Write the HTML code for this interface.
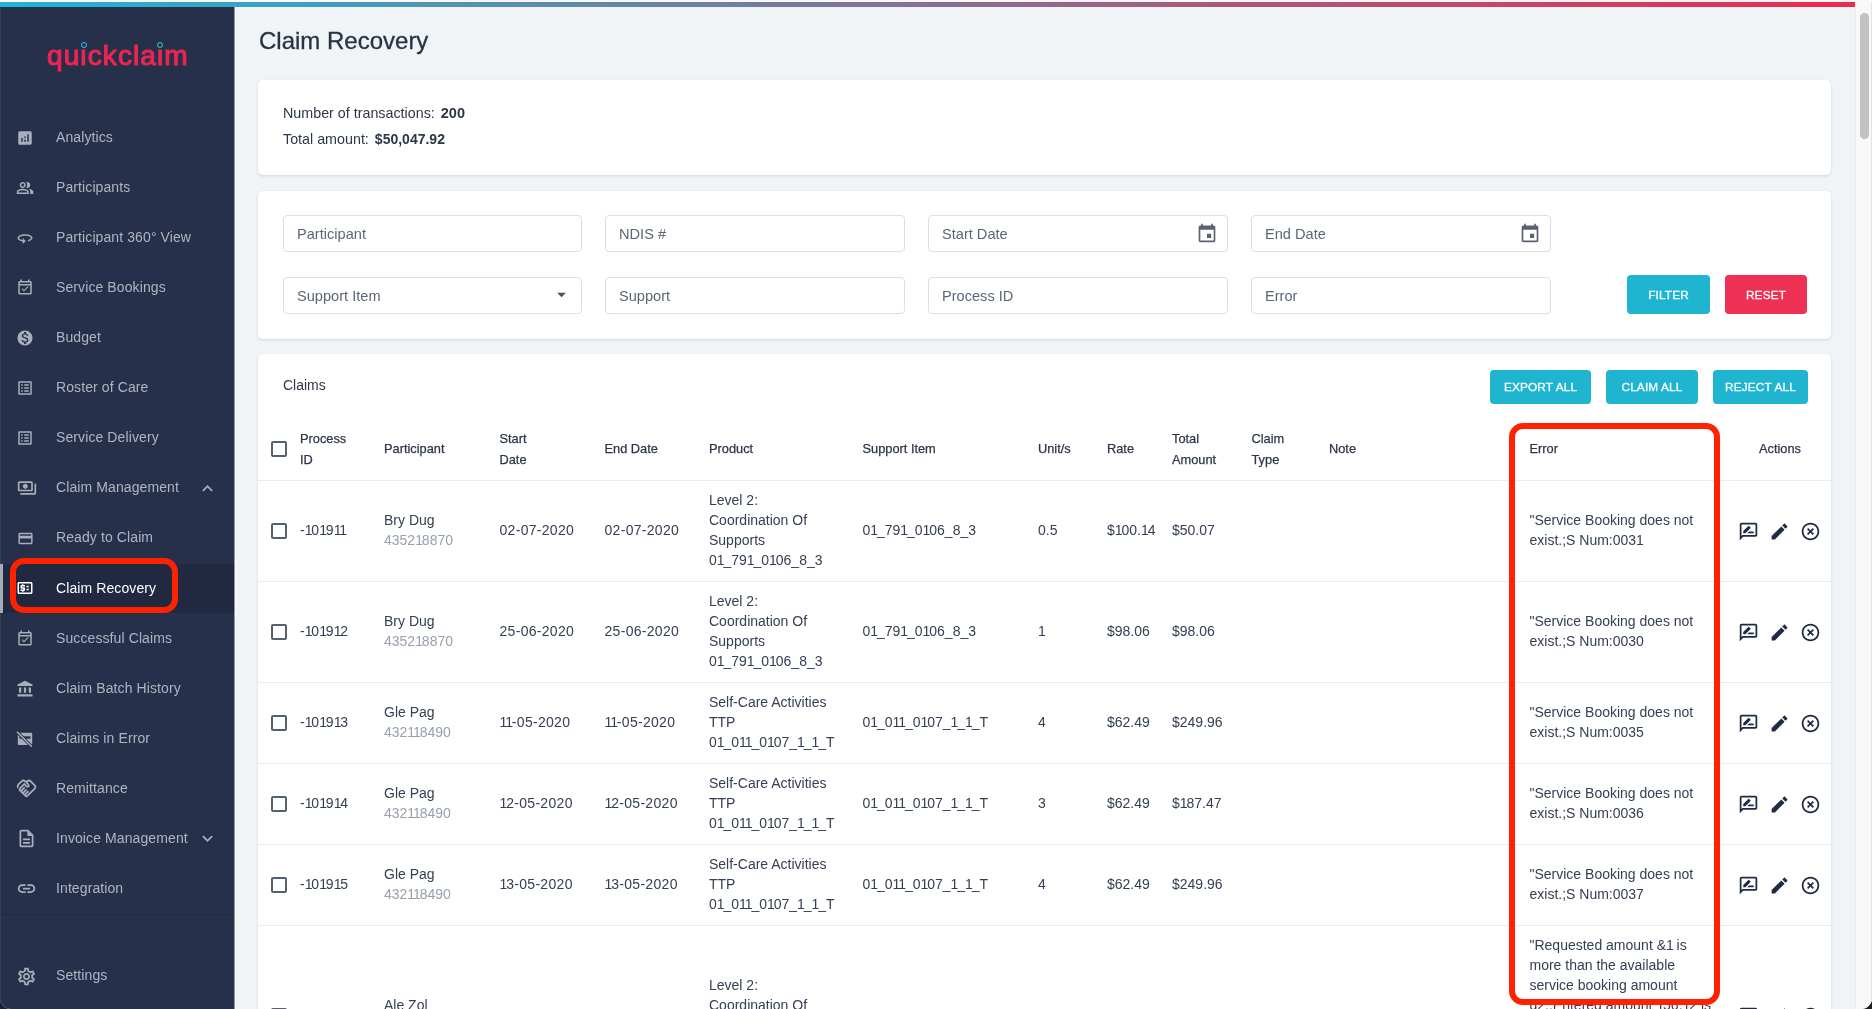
<!DOCTYPE html><html><head><meta charset="utf-8"><style>
*{box-sizing:border-box;margin:0;padding:0}
html,body{width:1872px;height:1009px;overflow:hidden;background:#1b2031}
body{font-family:"Liberation Sans",sans-serif;color:#2d3648;position:relative}
.a{position:absolute;white-space:nowrap}
#win{position:absolute;left:0;top:0;width:1872px;height:1009px;border-radius:0 0 11px 11px;overflow:hidden;background:#f1f4f7;will-change:transform}
.nav{position:absolute;left:56px;font-size:14px;line-height:20px;color:#adb4c0;letter-spacing:0.1px}
.card{position:absolute;background:#fff;border-radius:5px;box-shadow:0 1px 3px rgba(40,50,70,.16)}
.inp{position:absolute;height:37px;border:1px solid #dcdfe5;border-radius:4px;background:#fff;font-size:14.6px;color:#5d6676;padding:1px 0 0 13px;line-height:35px}
.btn{position:absolute;border-radius:4px;color:#fff;font-size:11.8px;font-weight:normal;-webkit-text-stroke:0.3px #fff;letter-spacing:0.15px;text-align:center}
.th{position:absolute;font-size:12.8px;font-weight:normal;-webkit-text-stroke:0.25px #2d3648;color:#2d3648;line-height:21px;white-space:nowrap}
.td{position:absolute;font-size:14px;color:#354054;line-height:20px;white-space:nowrap}
.hr{position:absolute;left:258px;width:1573px;height:1px;background:#ececee}
.cb{position:absolute;left:271px;width:16px;height:16px;border:2px solid #556072;border-radius:2px}
.gray{color:#97a0ac}
.n1{letter-spacing:-1.1px}
.dt{letter-spacing:0.3px}
.di{position:relative}
.di::after{content:'';position:absolute;left:-1px;right:-1px;top:0;height:8.5px;background:#27304b}
</style></head><body><div id="win">
<div class="a" style="left:0;top:0;width:1872px;height:2px;background:#fcf7f5"></div>
<div class="a" style="left:0;top:2px;width:1855px;height:5px;background:linear-gradient(90deg,#1db6d4 0%,#ee2a50 100%)"></div>
<div class="a" style="left:0;top:7px;width:234px;height:1002px;background:#27304b"></div>
<div class="a" style="left:234px;top:7px;width:1px;height:1002px;background:#8f96a3"></div>
<div class="a" style="left:0;top:7px;width:1px;height:1002px;background:#353d56"></div>
<div class="a" style="left:235px;top:7px;width:1px;height:1002px;background:#ffffff"></div>
<div id="logo" class="a" style="left:47px;top:42.4px;font-size:28px;line-height:28px;font-weight:normal;-webkit-text-stroke:1.1px #ec2552;color:#ec2552;letter-spacing:1.1px">qu<span class="di">i</span>ckcla<span class="di">i</span>m</div>
<div class="a" style="left:80.9px;top:41.9px;width:6px;height:6px;border:1.5px solid #3fc3e0;border-radius:50%"></div>
<div class="a" style="left:156.5px;top:41.9px;width:6px;height:6px;border:1.5px solid #3fc3e0;border-radius:50%"></div>
<div class="a" style="left:0;top:564px;width:234px;height:49px;background:#212940"></div>
<div class="a" style="left:0;top:564px;width:3px;height:49px;background:#a3acb8"></div>
<div class="a" style="left:0;top:914px;width:234px;height:1px;background:#222a42"></div>
<div class="nav a" style="top:127px;color:#aeb5c1">Analytics</div>
<svg class="a" style="left:16px;top:128.6px;" width="18" height="18" viewBox="0 0 24 24"><path fill="#a6afbb" d="M19,3H5C3.9,3,3,3.9,3,5v14c0,1.1,0.9,2,2,2h14c1.1,0,2-0.9,2-2V5C21,3.9,20.1,3,19,3z M9,17H7v-5h2V17z M13,17h-2v-3h2V17z M13,12h-2v-2h2V12z M17,17h-2V7h2V17z"/></svg>
<div class="nav a" style="top:177px;color:#aeb5c1">Participants</div>
<svg class="a" style="left:16.1px;top:178.7px;" width="18" height="18" viewBox="0 0 24 24"><path fill="#a6afbb" d="M16.67 13.13C18.04 14.06 19 15.32 19 17v3h4v-3c0-2.18-3.57-3.47-6.33-3.87zM15 12c2.21 0 4-1.79 4-4s-1.79-4-4-4c-.47 0-.91.1-1.33.24C14.5 5.27 15 6.58 15 8s-.5 2.73-1.33 3.76c.42.14.86.24 1.33.24zM9 12c2.21 0 4-1.79 4-4s-1.79-4-4-4-4 1.79-4 4 1.79 4 4 4zm0-6c1.1 0 2 .9 2 2s-.9 2-2 2-2-.9-2-2 .9-2 2-2zM9 13c-2.67 0-8 1.34-8 4v3h16v-3c0-2.66-5.33-4-8-4zm6 5H3v-.99C3.2 16.29 6.3 15 9 15s5.8 1.29 6 2v1z"/></svg>
<div class="nav a" style="top:227px;color:#aeb5c1">Participant 360° View</div>
<svg class="a" style="left:16.1px;top:228.8px;" width="18" height="18" viewBox="0 0 24 24"><path fill="#a6afbb" d="M12 7C6.48 7 2 9.24 2 12c0 2.24 2.94 4.13 7 4.77V20l4-4-4-4v2.73c-3.15-.56-5-1.9-5-2.73 0-1.06 3.04-3 8-3s8 1.94 8 3c0 .73-1.46 1.89-4 2.53v2.05c3.53-.77 6-2.53 6-4.58 0-2.76-4.48-5-10-5z"/></svg>
<div class="nav a" style="top:277px;color:#aeb5c1">Service Bookings</div>
<svg class="a" style="left:15.8px;top:278.1px;" width="18" height="18" viewBox="0 0 24 24"><path fill="#a6afbb" d="M19 4h-1V2h-2v2H8V2H6v2H5c-1.11 0-1.99.9-1.99 2L3 20c0 1.1.89 2 2 2h14c1.1 0 2-.9 2-2V6c0-1.1-.9-2-2-2zm0 16H5V10h14v10zm0-12H5V6h14v2zm-2.47 4.06l-1.06-1.06-4.88 4.88-2.12-2.12-1.06 1.06L10.58 18z"/></svg>
<div class="nav a" style="top:327px;color:#aeb5c1">Budget</div>
<svg class="a" style="left:15.8px;top:329.2px;" width="18" height="18" viewBox="0 0 24 24"><path fill="#a6afbb" d="M12 2C6.48 2 2 6.48 2 12s4.48 10 10 10 10-4.48 10-10S17.52 2 12 2zm1.41 16.09V20h-2.67v-1.93c-1.71-.36-3.16-1.46-3.27-3.4h1.96c.1 1.05.82 1.87 2.65 1.87 1.96 0 2.4-.98 2.4-1.59 0-.83-.44-1.61-2.67-2.14-2.48-.6-4.180-1.62-4.18-3.67 0-1.72 1.39-2.84 3.11-3.21V4h2.67v1.95c1.86.45 2.79 1.86 2.85 3.39H14.3c-.05-1.11-.64-1.87-2.22-1.87-1.5 0-2.4.68-2.4 1.640 0 .84.65 1.39 2.67 1.91s4.18 1.39 4.18 3.91c-.01 1.83-1.38 2.83-3.12 3.16z"/></svg>
<div class="nav a" style="top:377px;color:#aeb5c1">Roster of Care</div>
<svg class="a" style="left:16px;top:378.9px;" width="18" height="18" viewBox="0 0 24 24"><path fill="#a6afbb" d="M11 7h6v2h-6zm0 4h6v2h-6zm0 4h6v2h-6zM7 7h2v2H7zm0 4h2v2H7zm0 4h2v2H7zM20.1 3H3.9c-.5 0-.9.4-.9.9v16.2c0 .4.4.9.9.9h16.2c.4 0 .9-.5.9-.9V3.9c0-.5-.5-.9-.9-.9zM19 19H5V5h14v14z"/></svg>
<div class="nav a" style="top:427px;color:#aeb5c1">Service Delivery</div>
<svg class="a" style="left:16px;top:428.9px;" width="18" height="18" viewBox="0 0 24 24"><path fill="#a6afbb" d="M11 7h6v2h-6zm0 4h6v2h-6zm0 4h6v2h-6zM7 7h2v2H7zm0 4h2v2H7zm0 4h2v2H7zM20.1 3H3.9c-.5 0-.9.4-.9.9v16.2c0 .4.4.9.9.9h16.2c.4 0 .9-.5.9-.9V3.9c0-.5-.5-.9-.9-.9zM19 19H5V5h14v14z"/></svg>
<div class="nav a" style="top:477px;color:#aeb5c1">Claim Management</div>
<svg class="a" style="left:16.5px;top:477.7px;" width="20" height="20" viewBox="0 0 24 24"><path fill="#a6afbb" d="M19 14V6c0-1.1-.9-2-2-2H3c-1.1 0-2 .9-2 2v8c0 1.1.9 2 2 2h14c1.1 0 2-.9 2-2zm-2 0H3V6h14v8zm-7-7c-1.66 0-3 1.34-3 3s1.34 3 3 3 3-1.34 3-3-1.34-3-3-3zm13 0v11c0 1.1-.9 2-2 2H4v-2h17V7h2z"/></svg>
<div class="nav a" style="top:527px;color:#aeb5c1">Ready to Claim</div>
<svg class="a" style="left:16.5px;top:529.8px;" width="17" height="17" viewBox="0 0 24 24"><path fill="#a6afbb" d="M20 4H4c-1.11 0-1.99.89-1.99 2L2 18c0 1.11.89 2 2 2h16c1.11 0 2-.89 2-2V6c0-1.11-.89-2-2-2zm0 14H4v-6h16v6zm0-10H4V6h16v2z"/></svg>
<div class="nav a" style="top:578px;color:#ffffff">Claim Recovery</div>
<svg class="a" style="left:16px;top:579px;" width="18" height="18" viewBox="0 0 24 24"><path fill="#ffffff" d="M20 4H4c-1.11 0-1.99.89-1.99 2L2 18c0 1.11.89 2 2 2h16c1.11 0 2-.89 2-2V6c0-1.11-.89-2-2-2zm0 14H4V6h16v12zM8 17h2v-1h1c.55 0 1-.45 1-1v-3c0-.55-.45-1-1-1H8v-1h4V8h-2V7H8v1H7c-.55 0-1 .45-1 1v3c0 .55.45 1 1 1h3v1H6v2h2v1zM14 9h3v2h-3zM14 13h3v2h-3z"/></svg>
<div class="nav a" style="top:628px;color:#aeb5c1">Successful Claims</div>
<svg class="a" style="left:15.8px;top:629px;" width="18" height="18" viewBox="0 0 24 24"><path fill="#a6afbb" d="M19 4h-1V2h-2v2H8V2H6v2H5c-1.11 0-1.99.9-1.99 2L3 20c0 1.1.89 2 2 2h14c1.1 0 2-.9 2-2V6c0-1.1-.9-2-2-2zm0 16H5V10h14v10zm0-12H5V6h14v2zm-2.47 4.06l-1.06-1.06-4.88 4.88-2.12-2.12-1.06 1.06L10.58 18z"/></svg>
<div class="nav a" style="top:678px;color:#aeb5c1">Claim Batch History</div>
<svg class="a" style="left:15.6px;top:679.5px;" width="18" height="18" viewBox="0 0 24 24"><path fill="#a6afbb" d="M4 10h3v7H4zm6.5 0h3v7h-3zM2 19h20v3H2zm15-9h3v7h-3zm-5-9L2 6v2h20V6z"/></svg>
<div class="nav a" style="top:728px;color:#aeb5c1">Claims in Error</div>
<div class="nav a" style="top:778px;color:#aeb5c1">Remittance</div>
<svg class="a" style="left:16.2px;top:778.1px;" width="21" height="21" viewBox="0 0 24 24"><path fill="#a6afbb" d="M12.22 19.85c-.18.18-.5.21-.71 0a.504.504 0 010-.71l3.39-3.39-1.41-1.41-3.39 3.39c-.19.2-.51.19-.71 0a.504.504 0 010-.71l3.39-3.39-1.41-1.41-3.39 3.39c-.18.18-.5.21-.71 0a.513.513 0 010-.71l3.39-3.39-1.42-1.41-3.39 3.39c-.18.18-.5.21-.71 0a.513.513 0 010-.71L9.52 8.4l1.87 1.86c.95.95 2.59.94 3.54 0 .98-.98.98-2.56 0-3.54l-1.86-1.86.28-.28c.78-.78 2.05-.78 2.83 0l4.24 4.24c.78.78.78 2.05 0 2.83l-8.2 8.2zm9.61-6.78a4.008 4.008 0 000-5.66l-4.24-4.24a4.008 4.008 0 00-5.66 0l-.28.28-.28-.28a4.008 4.008 0 00-5.66 0L2.17 6.71a3.992 3.992 0 00-.4 5.19l1.45-1.45a2 2 0 01.37-2.33l3.54-3.54c.78-.78 2.05-.78 2.83 0l3.56 3.56c.18.18.21.5 0 .71-.21.21-.53.18-.71 0L9.52 5.57l-5.8 5.79c-.98.97-.98 2.56 0 3.54.39.39.89.63 1.42.7a2.458 2.458 0 002.12 2.12 2.458 2.458 0 002.12 2.12c.07.54.31 1.03.7 1.42.47.47 1.1.73 1.77.73.67 0 1.3-.26 1.77-.73l8.21-8.19z"/></svg>
<div class="nav a" style="top:828px;color:#aeb5c1">Invoice Management</div>
<svg class="a" style="left:16.25px;top:828.4px;" width="21" height="21" viewBox="0 0 24 24"><path fill="#a6afbb" d="M8 16h8v2H8zm0-4h8v2H8zm6-10H6c-1.1 0-2 .9-2 2v16c0 1.1.89 2 1.99 2H18c1.1 0 2-.9 2-2V8l-6-6zm4 18H6V4h7v5h5v11z"/></svg>
<div class="nav a" style="top:878px;color:#aeb5c1">Integration</div>
<svg class="a" style="left:16.1px;top:877.9px;" width="21" height="21" viewBox="0 0 24 24"><path fill="#a6afbb" d="M17 7h-4v2h4c1.65 0 3 1.35 3 3s-1.35 3-3 3h-4v2h4c2.76 0 5-2.24 5-5s-2.24-5-5-5zm-6 8H7c-1.65 0-3-1.35-3-3s1.35-3 3-3h4V7H7c-2.76 0-5 2.24-5 5s2.24 5 5 5h4v-2zm-3-4h8v2H8z"/></svg>
<div class="nav a" style="top:965px;color:#aeb5c1">Settings</div>
<svg class="a" style="left:15.95px;top:965.7px;" width="21" height="21" viewBox="0 0 24 24"><path fill="#a6afbb" d="M19.43 12.98c.04-.32.07-.64.07-.98 0-.34-.03-.66-.07-.98l2.11-1.65c.19-.15.24-.42.12-.64l-2-3.46a.5.5 0 00-.61-.22l-2.49 1c-.52-.4-1.08-.73-1.69-.98l-.38-2.65A.488.488 0 0014 2h-4c-.25 0-.46.18-.49.42l-.38 2.65c-.61.25-1.17.59-1.69.98l-2.49-1a.566.566 0 00-.18-.03c-.17 0-.34.09-.43.25l-2 3.46c-.13.22-.07.49.12.64l2.11 1.65c-.04.32-.07.65-.07.98 0 .33.03.66.07.98l-2.11 1.65c-.19.15-.24.42-.12.64l2 3.46a.5.5 0 00.61.22l2.49-1c.52.4 1.08.73 1.69.98l.38 2.65c.03.24.24.42.49.42h4c.25 0 .46-.18.49-.42l.38-2.65c.61-.25 1.17-.59 1.69-.98l2.49 1c.06.02.12.03.18.03.17 0 .34-.09.43-.25l2-3.46c.12-.22.07-.49-.12-.64l-2.11-1.65zm-1.98-1.71c.04.31.05.52.05.73 0 .21-.02.43-.05.73l-.14 1.13.89.7 1.08.84-.7 1.21-1.27-.51-1.04-.42-.9.68c-.43.32-.84.56-1.25.73l-1.06.43-.16 1.13-.2 1.35h-1.4l-.19-1.35-.16-1.13-1.06-.43c-.43-.18-.83-.41-1.23-.71l-.91-.7-1.06.43-1.27.51-.7-1.21 1.08-.84.89-.7-.14-1.13c-.03-.31-.05-.54-.05-.74s.02-.43.05-.73l.14-1.13-.89-.7-1.08-.84.7-1.21 1.27.51 1.04.42.9-.68c.43-.32.84-.56 1.25-.73l1.06-.43.16-1.13.2-1.35h1.39l.19 1.35.16 1.13 1.06.43c.43.18.83.41 1.23.71l.91.7 1.06-.43 1.27-.51.7 1.21-1.07.85-.89.7.14 1.13zM12 8c-2.21 0-4 1.79-4 4s1.79 4 4 4 4-1.79 4-4-1.79-4-4-4zm0 6c-1.1 0-2-.9-2-2s.9-2 2-2 2 .9 2 2-.9 2-2 2z"/></svg>
<svg class="a" style="left:0;top:0" width="60" height="1009" viewBox="0 0 60 1009"><rect x="17.8" y="732.7" width="14.4" height="12.3" rx="1.3" fill="#a6afbb"/><rect x="19.5" y="736.3" width="11" height="2.4" fill="#27304b"/><line x1="17" y1="731.8" x2="31.9" y2="746.7" stroke="#27304b" stroke-width="3.2"/><line x1="17" y1="731.8" x2="31.9" y2="746.7" stroke="#a6afbb" stroke-width="1.5"/></svg>
<svg class="a" style="left:197.2px;top:477.7px;" width="21" height="21" viewBox="0 0 24 24"><path fill="#a6afbb" d="M12 8l-6 6 1.41 1.41L12 10.83l4.59 4.58L18 14z"/></svg>
<svg class="a" style="left:197.3px;top:827.7px;" width="21" height="21" viewBox="0 0 24 24"><path fill="#a6afbb" d="M16.59 8.59L12 13.17 7.41 8.59 6 10l6 6 6-6z"/></svg>
<div class="a" style="left:10px;top:558px;width:168px;height:55px;border:6px solid #ff2100;border-radius:14px"></div>
<div class="a" style="left:259px;top:26.7px;font-size:24px;color:#2a3346;-webkit-text-stroke:0.3px #2a3346">Claim Recovery</div>
<div class="card" style="left:258px;top:80px;width:1573px;height:95px"></div>
<div class="a" style="left:283px;top:105px;font-size:14.3px;color:#2d3648">Number of transactions:<b style="margin-left:6px;font-size:14.5px">200</b></div>
<div class="a" style="left:283px;top:131px;font-size:14.3px;color:#2d3648">Total amount:<b style="margin-left:6px;font-size:14px">$50,047.92</b></div>
<div class="card" style="left:258px;top:191px;width:1573px;height:148px"></div>
<div class="inp" style="left:283px;top:215px;width:299px">Participant</div>
<div class="inp" style="left:605px;top:215px;width:300px">NDIS #</div>
<div class="inp" style="left:928px;top:215px;width:300px">Start Date</div>
<div class="inp" style="left:1251px;top:215px;width:300px">End Date</div>
<div class="inp" style="left:283px;top:277px;width:299px">Support Item</div>
<div class="inp" style="left:605px;top:277px;width:300px">Support</div>
<div class="inp" style="left:928px;top:277px;width:300px">Process ID</div>
<div class="inp" style="left:1251px;top:277px;width:300px">Error</div>
<svg class="a" style="left:1196.8px;top:222.8px;" width="20" height="20" viewBox="0 0 24 24"><path fill="#5a6272" d="M20 3h-1V1h-2v2H7V1H5v2H4c-1.1 0-2 .9-2 2v16c0 1.1.9 2 2 2h16c1.1 0 2-.9 2-2V5c0-1.1-.9-2-2-2zm0 18H4V8h16v13zM12 13h5v5h-5z"/></svg>
<svg class="a" style="left:1519.8px;top:222.8px;" width="20" height="20" viewBox="0 0 24 24"><path fill="#5a6272" d="M20 3h-1V1h-2v2H7V1H5v2H4c-1.1 0-2 .9-2 2v16c0 1.1.9 2 2 2h16c1.1 0 2-.9 2-2V5c0-1.1-.9-2-2-2zm0 18H4V8h16v13zM12 13h5v5h-5z"/></svg>
<svg class="a" style="left:551.3px;top:283.5px;" width="21" height="21" viewBox="0 0 24 24"><path fill="#4a5263" d="M7 10l5 5 5-5z"/></svg>
<div class="btn" style="left:1627px;top:275px;width:83px;height:39px;line-height:41px;background:#1fb5d1">FILTER</div>
<div class="btn" style="left:1725px;top:275px;width:82px;height:39px;line-height:41px;background:#ee3054">RESET</div>
<div class="card" style="left:258px;top:354px;width:1573px;height:720px"></div>
<div class="a" style="left:283px;top:377px;font-size:14px;color:#2d3648">Claims</div>
<div class="btn" style="left:1490px;top:370px;width:101px;height:34px;line-height:34px;background:#1fb5d1">EXPORT ALL</div>
<div class="btn" style="left:1606px;top:370px;width:92px;height:34px;line-height:34px;background:#1fb5d1">CLAIM ALL</div>
<div class="btn" style="left:1713px;top:370px;width:95px;height:34px;line-height:34px;background:#1fb5d1">REJECT ALL</div>
<div class="th" style="left:300px;top:427.5px">Process<br>ID</div>
<div class="th" style="left:384px;top:438.0px">Participant</div>
<div class="th" style="left:499.5px;top:427.5px">Start<br>Date</div>
<div class="th" style="left:604.5px;top:438.0px">End Date</div>
<div class="th" style="left:709px;top:438.0px">Product</div>
<div class="th" style="left:862.5px;top:438.0px">Support Item</div>
<div class="th" style="left:1038px;top:438.0px">Unit/s</div>
<div class="th" style="left:1107px;top:438.0px">Rate</div>
<div class="th" style="left:1172px;top:427.5px">Total<br>Amount</div>
<div class="th" style="left:1251.5px;top:427.5px">Claim<br>Type</div>
<div class="th" style="left:1329px;top:438.0px">Note</div>
<div class="th" style="left:1529.5px;top:438.0px">Error</div>
<div class="th" style="left:1759px;top:438.0px">Actions</div>
<div class="cb" style="top:440.5px"></div>
<div class="hr" style="top:480px"></div>
<div class="hr" style="top:581px"></div>
<div class="hr" style="top:682px"></div>
<div class="hr" style="top:763px"></div>
<div class="hr" style="top:844px"></div>
<div class="hr" style="top:925px"></div>
<div class="cb" style="top:522.5px"></div>
<div class="td " style="left:300px;top:519.7px">-<span class="n1">1</span>0<span class="n1">1</span>9<span class="n1">1</span><span class="n1">1</span></div>
<div class="td" style="left:384px;top:509.7px">Bry Dug<br><span class="gray">4352<span class="n1">1</span>8870</span></div>
<div class="td dt" style="left:499.5px;top:519.7px">02-07-2020</div>
<div class="td dt" style="left:604.5px;top:519.7px">02-07-2020</div>
<div class="td " style="left:709px;top:489.7px">Level 2:<br>Coordination Of<br>Supports<br>0<span class="n1">1</span>_79<span class="n1">1</span>_0<span class="n1">1</span>06_8_3</div>
<div class="td " style="left:862.5px;top:519.7px">0<span class="n1">1</span>_79<span class="n1">1</span>_0<span class="n1">1</span>06_8_3</div>
<div class="td " style="left:1038px;top:519.7px">0.5</div>
<div class="td " style="left:1107px;top:519.7px">$<span class="n1">1</span>00.<span class="n1">1</span>4</div>
<div class="td " style="left:1172px;top:519.7px">$50.07</div>
<div class="td " style="left:1529.5px;top:509.7px">&quot;Service Booking does not<br>exist.;S Num:003<span class="n1">1</span></div>
<svg class="a" style="left:1737.7px;top:520.7px;" width="21" height="21" viewBox="0 0 24 24"><path fill="#1f2a44" d="M20 2H4c-1.1 0-1.99.9-1.99 2L2 22l4-4h14c1.1 0 2-.9 2-2V4c0-1.1-.9-2-2-2zm0 14H5.17l-.59.59-.58.58V4h16v12zm-9.5-2H18v-2h-5.5zm3.86-5.87c.2-.2.2-.51 0-.71l-1.77-1.77c-.2-.2-.51-.2-.71 0L6 11.53V14h2.47l5.89-5.87z"/></svg>
<svg class="a" style="left:1768.9px;top:520.7px;" width="21" height="21" viewBox="0 0 24 24"><path fill="#1f2a44" d="M3 17.25V21h3.75L17.81 9.94l-3.75-3.75L3 17.25zM20.71 7.04c.39-.39.39-1.02 0-1.41l-2.34-2.34c-.39-.39-1.02-.39-1.41 0l-1.83 1.83 3.75 3.75 1.83-1.83z"/></svg>
<svg class="a" style="left:1800.3px;top:520.7px;" width="21" height="21" viewBox="0 0 24 24"><path fill="#1f2a44" d="M14.59 8L12 10.59 9.41 8 8 9.41 10.59 12 8 14.59 9.41 16 12 13.41 14.59 16 16 14.59 13.41 12 16 9.41 14.59 8zM12 2C6.47 2 2 6.47 2 12s4.47 10 10 10 10-4.47 10-10S17.53 2 12 2zm0 18c-4.41 0-8-3.59-8-8s3.59-8 8-8 8 3.59 8 8-3.59 8-8 8z"/></svg>
<div class="cb" style="top:623.5px"></div>
<div class="td " style="left:300px;top:620.7px">-<span class="n1">1</span>0<span class="n1">1</span>9<span class="n1">1</span>2</div>
<div class="td" style="left:384px;top:610.7px">Bry Dug<br><span class="gray">4352<span class="n1">1</span>8870</span></div>
<div class="td dt" style="left:499.5px;top:620.7px">25-06-2020</div>
<div class="td dt" style="left:604.5px;top:620.7px">25-06-2020</div>
<div class="td " style="left:709px;top:590.7px">Level 2:<br>Coordination Of<br>Supports<br>0<span class="n1">1</span>_79<span class="n1">1</span>_0<span class="n1">1</span>06_8_3</div>
<div class="td " style="left:862.5px;top:620.7px">0<span class="n1">1</span>_79<span class="n1">1</span>_0<span class="n1">1</span>06_8_3</div>
<div class="td " style="left:1038px;top:620.7px"><span class="n1">1</span></div>
<div class="td " style="left:1107px;top:620.7px">$98.06</div>
<div class="td " style="left:1172px;top:620.7px">$98.06</div>
<div class="td " style="left:1529.5px;top:610.7px">&quot;Service Booking does not<br>exist.;S Num:0030</div>
<svg class="a" style="left:1737.7px;top:621.7px;" width="21" height="21" viewBox="0 0 24 24"><path fill="#1f2a44" d="M20 2H4c-1.1 0-1.99.9-1.99 2L2 22l4-4h14c1.1 0 2-.9 2-2V4c0-1.1-.9-2-2-2zm0 14H5.17l-.59.59-.58.58V4h16v12zm-9.5-2H18v-2h-5.5zm3.86-5.87c.2-.2.2-.51 0-.71l-1.77-1.77c-.2-.2-.51-.2-.71 0L6 11.53V14h2.47l5.89-5.87z"/></svg>
<svg class="a" style="left:1768.9px;top:621.7px;" width="21" height="21" viewBox="0 0 24 24"><path fill="#1f2a44" d="M3 17.25V21h3.75L17.81 9.94l-3.75-3.75L3 17.25zM20.71 7.04c.39-.39.39-1.02 0-1.41l-2.34-2.34c-.39-.39-1.02-.39-1.41 0l-1.83 1.83 3.75 3.75 1.83-1.83z"/></svg>
<svg class="a" style="left:1800.3px;top:621.7px;" width="21" height="21" viewBox="0 0 24 24"><path fill="#1f2a44" d="M14.59 8L12 10.59 9.41 8 8 9.41 10.59 12 8 14.59 9.41 16 12 13.41 14.59 16 16 14.59 13.41 12 16 9.41 14.59 8zM12 2C6.47 2 2 6.47 2 12s4.47 10 10 10 10-4.47 10-10S17.53 2 12 2zm0 18c-4.41 0-8-3.59-8-8s3.59-8 8-8 8 3.59 8 8-3.59 8-8 8z"/></svg>
<div class="cb" style="top:714.5px"></div>
<div class="td " style="left:300px;top:711.7px">-<span class="n1">1</span>0<span class="n1">1</span>9<span class="n1">1</span>3</div>
<div class="td" style="left:384px;top:701.7px">Gle Pag<br><span class="gray">432<span class="n1">1</span><span class="n1">1</span>8490</span></div>
<div class="td dt" style="left:499.5px;top:711.7px"><span class="n1">1</span><span class="n1">1</span>-05-2020</div>
<div class="td dt" style="left:604.5px;top:711.7px"><span class="n1">1</span><span class="n1">1</span>-05-2020</div>
<div class="td " style="left:709px;top:691.7px">Self-Care Activities<br>TTP<br>0<span class="n1">1</span>_0<span class="n1">1</span><span class="n1">1</span>_0<span class="n1">1</span>07_<span class="n1">1</span>_<span class="n1">1</span>_T</div>
<div class="td " style="left:862.5px;top:711.7px">0<span class="n1">1</span>_0<span class="n1">1</span><span class="n1">1</span>_0<span class="n1">1</span>07_<span class="n1">1</span>_<span class="n1">1</span>_T</div>
<div class="td " style="left:1038px;top:711.7px">4</div>
<div class="td " style="left:1107px;top:711.7px">$62.49</div>
<div class="td " style="left:1172px;top:711.7px">$249.96</div>
<div class="td " style="left:1529.5px;top:701.7px">&quot;Service Booking does not<br>exist.;S Num:0035</div>
<svg class="a" style="left:1737.7px;top:712.7px;" width="21" height="21" viewBox="0 0 24 24"><path fill="#1f2a44" d="M20 2H4c-1.1 0-1.99.9-1.99 2L2 22l4-4h14c1.1 0 2-.9 2-2V4c0-1.1-.9-2-2-2zm0 14H5.17l-.59.59-.58.58V4h16v12zm-9.5-2H18v-2h-5.5zm3.86-5.87c.2-.2.2-.51 0-.71l-1.77-1.77c-.2-.2-.51-.2-.71 0L6 11.53V14h2.47l5.89-5.87z"/></svg>
<svg class="a" style="left:1768.9px;top:712.7px;" width="21" height="21" viewBox="0 0 24 24"><path fill="#1f2a44" d="M3 17.25V21h3.75L17.81 9.94l-3.75-3.75L3 17.25zM20.71 7.04c.39-.39.39-1.02 0-1.41l-2.34-2.34c-.39-.39-1.02-.39-1.41 0l-1.83 1.83 3.75 3.75 1.83-1.83z"/></svg>
<svg class="a" style="left:1800.3px;top:712.7px;" width="21" height="21" viewBox="0 0 24 24"><path fill="#1f2a44" d="M14.59 8L12 10.59 9.41 8 8 9.41 10.59 12 8 14.59 9.41 16 12 13.41 14.59 16 16 14.59 13.41 12 16 9.41 14.59 8zM12 2C6.47 2 2 6.47 2 12s4.47 10 10 10 10-4.47 10-10S17.53 2 12 2zm0 18c-4.41 0-8-3.59-8-8s3.59-8 8-8 8 3.59 8 8-3.59 8-8 8z"/></svg>
<div class="cb" style="top:795.5px"></div>
<div class="td " style="left:300px;top:792.7px">-<span class="n1">1</span>0<span class="n1">1</span>9<span class="n1">1</span>4</div>
<div class="td" style="left:384px;top:782.7px">Gle Pag<br><span class="gray">432<span class="n1">1</span><span class="n1">1</span>8490</span></div>
<div class="td dt" style="left:499.5px;top:792.7px"><span class="n1">1</span>2-05-2020</div>
<div class="td dt" style="left:604.5px;top:792.7px"><span class="n1">1</span>2-05-2020</div>
<div class="td " style="left:709px;top:772.7px">Self-Care Activities<br>TTP<br>0<span class="n1">1</span>_0<span class="n1">1</span><span class="n1">1</span>_0<span class="n1">1</span>07_<span class="n1">1</span>_<span class="n1">1</span>_T</div>
<div class="td " style="left:862.5px;top:792.7px">0<span class="n1">1</span>_0<span class="n1">1</span><span class="n1">1</span>_0<span class="n1">1</span>07_<span class="n1">1</span>_<span class="n1">1</span>_T</div>
<div class="td " style="left:1038px;top:792.7px">3</div>
<div class="td " style="left:1107px;top:792.7px">$62.49</div>
<div class="td " style="left:1172px;top:792.7px">$<span class="n1">1</span>87.47</div>
<div class="td " style="left:1529.5px;top:782.7px">&quot;Service Booking does not<br>exist.;S Num:0036</div>
<svg class="a" style="left:1737.7px;top:793.7px;" width="21" height="21" viewBox="0 0 24 24"><path fill="#1f2a44" d="M20 2H4c-1.1 0-1.99.9-1.99 2L2 22l4-4h14c1.1 0 2-.9 2-2V4c0-1.1-.9-2-2-2zm0 14H5.17l-.59.59-.58.58V4h16v12zm-9.5-2H18v-2h-5.5zm3.86-5.87c.2-.2.2-.51 0-.71l-1.77-1.77c-.2-.2-.51-.2-.71 0L6 11.53V14h2.47l5.89-5.87z"/></svg>
<svg class="a" style="left:1768.9px;top:793.7px;" width="21" height="21" viewBox="0 0 24 24"><path fill="#1f2a44" d="M3 17.25V21h3.75L17.81 9.94l-3.75-3.75L3 17.25zM20.71 7.04c.39-.39.39-1.02 0-1.41l-2.34-2.34c-.39-.39-1.02-.39-1.41 0l-1.83 1.83 3.75 3.75 1.83-1.83z"/></svg>
<svg class="a" style="left:1800.3px;top:793.7px;" width="21" height="21" viewBox="0 0 24 24"><path fill="#1f2a44" d="M14.59 8L12 10.59 9.41 8 8 9.41 10.59 12 8 14.59 9.41 16 12 13.41 14.59 16 16 14.59 13.41 12 16 9.41 14.59 8zM12 2C6.47 2 2 6.47 2 12s4.47 10 10 10 10-4.47 10-10S17.53 2 12 2zm0 18c-4.41 0-8-3.59-8-8s3.59-8 8-8 8 3.59 8 8-3.59 8-8 8z"/></svg>
<div class="cb" style="top:876.5px"></div>
<div class="td " style="left:300px;top:873.7px">-<span class="n1">1</span>0<span class="n1">1</span>9<span class="n1">1</span>5</div>
<div class="td" style="left:384px;top:863.7px">Gle Pag<br><span class="gray">432<span class="n1">1</span><span class="n1">1</span>8490</span></div>
<div class="td dt" style="left:499.5px;top:873.7px"><span class="n1">1</span>3-05-2020</div>
<div class="td dt" style="left:604.5px;top:873.7px"><span class="n1">1</span>3-05-2020</div>
<div class="td " style="left:709px;top:853.7px">Self-Care Activities<br>TTP<br>0<span class="n1">1</span>_0<span class="n1">1</span><span class="n1">1</span>_0<span class="n1">1</span>07_<span class="n1">1</span>_<span class="n1">1</span>_T</div>
<div class="td " style="left:862.5px;top:873.7px">0<span class="n1">1</span>_0<span class="n1">1</span><span class="n1">1</span>_0<span class="n1">1</span>07_<span class="n1">1</span>_<span class="n1">1</span>_T</div>
<div class="td " style="left:1038px;top:873.7px">4</div>
<div class="td " style="left:1107px;top:873.7px">$62.49</div>
<div class="td " style="left:1172px;top:873.7px">$249.96</div>
<div class="td " style="left:1529.5px;top:863.7px">&quot;Service Booking does not<br>exist.;S Num:0037</div>
<svg class="a" style="left:1737.7px;top:874.7px;" width="21" height="21" viewBox="0 0 24 24"><path fill="#1f2a44" d="M20 2H4c-1.1 0-1.99.9-1.99 2L2 22l4-4h14c1.1 0 2-.9 2-2V4c0-1.1-.9-2-2-2zm0 14H5.17l-.59.59-.58.58V4h16v12zm-9.5-2H18v-2h-5.5zm3.86-5.87c.2-.2.2-.51 0-.71l-1.77-1.77c-.2-.2-.51-.2-.71 0L6 11.53V14h2.47l5.89-5.87z"/></svg>
<svg class="a" style="left:1768.9px;top:874.7px;" width="21" height="21" viewBox="0 0 24 24"><path fill="#1f2a44" d="M3 17.25V21h3.75L17.81 9.94l-3.75-3.75L3 17.25zM20.71 7.04c.39-.39.39-1.02 0-1.41l-2.34-2.34c-.39-.39-1.02-.39-1.41 0l-1.83 1.83 3.75 3.75 1.83-1.83z"/></svg>
<svg class="a" style="left:1800.3px;top:874.7px;" width="21" height="21" viewBox="0 0 24 24"><path fill="#1f2a44" d="M14.59 8L12 10.59 9.41 8 8 9.41 10.59 12 8 14.59 9.41 16 12 13.41 14.59 16 16 14.59 13.41 12 16 9.41 14.59 8zM12 2C6.47 2 2 6.47 2 12s4.47 10 10 10 10-4.47 10-10S17.53 2 12 2zm0 18c-4.41 0-8-3.59-8-8s3.59-8 8-8 8 3.59 8 8-3.59 8-8 8z"/></svg>
<div class="cb" style="top:1008px"></div>
<div class="td " style="left:300px;top:1005.2px">-<span class="n1">1</span>0<span class="n1">1</span>9<span class="n1">1</span>6</div>
<div class="td" style="left:384px;top:995.2px">Ale Zol<br><span class="gray">43098<span class="n1">1</span>2<span class="n1">1</span>2</span></div>
<div class="td dt" style="left:499.5px;top:1005.2px">0<span class="n1">1</span>-07-2020</div>
<div class="td dt" style="left:604.5px;top:1005.2px">0<span class="n1">1</span>-07-2020</div>
<div class="td " style="left:709px;top:975.2px">Level 2:<br>Coordination Of<br>Supports<br>0<span class="n1">1</span>_79<span class="n1">1</span>_0<span class="n1">1</span>06_8_3</div>
<div class="td " style="left:862.5px;top:1005.2px">0<span class="n1">1</span>_79<span class="n1">1</span>_0<span class="n1">1</span>06_8_3</div>
<div class="td " style="left:1038px;top:1005.2px"><span class="n1">1</span></div>
<div class="td " style="left:1107px;top:1005.2px">$<span class="n1">1</span>00.<span class="n1">1</span>4</div>
<div class="td " style="left:1172px;top:1005.2px">$<span class="n1">1</span>00.<span class="n1">1</span>4</div>
<div class="td " style="left:1529.5px;top:935.2px">&quot;Requested amount &amp;<span class="n1">1</span> is<br>more than the available<br>service booking amount<br>q2.;Entered amount <span class="n1">1</span>56.<span class="n1">1</span>2 is<br>more than available<br>service booking amount<br>q2.;S Num:0040<br></div>
<svg class="a" style="left:1737.7px;top:1006.2px;" width="21" height="21" viewBox="0 0 24 24"><path fill="#1f2a44" d="M20 2H4c-1.1 0-1.99.9-1.99 2L2 22l4-4h14c1.1 0 2-.9 2-2V4c0-1.1-.9-2-2-2zm0 14H5.17l-.59.59-.58.58V4h16v12zm-9.5-2H18v-2h-5.5zm3.86-5.87c.2-.2.2-.51 0-.71l-1.77-1.77c-.2-.2-.51-.2-.71 0L6 11.53V14h2.47l5.89-5.87z"/></svg>
<svg class="a" style="left:1768.9px;top:1006.2px;" width="21" height="21" viewBox="0 0 24 24"><path fill="#1f2a44" d="M3 17.25V21h3.75L17.81 9.94l-3.75-3.75L3 17.25zM20.71 7.04c.39-.39.39-1.02 0-1.41l-2.34-2.34c-.39-.39-1.02-.39-1.41 0l-1.83 1.83 3.75 3.75 1.83-1.83z"/></svg>
<svg class="a" style="left:1800.3px;top:1006.2px;" width="21" height="21" viewBox="0 0 24 24"><path fill="#1f2a44" d="M14.59 8L12 10.59 9.41 8 8 9.41 10.59 12 8 14.59 9.41 16 12 13.41 14.59 16 16 14.59 13.41 12 16 9.41 14.59 8zM12 2C6.47 2 2 6.47 2 12s4.47 10 10 10 10-4.47 10-10S17.53 2 12 2zm0 18c-4.41 0-8-3.59-8-8s3.59-8 8-8 8 3.59 8 8-3.59 8-8 8z"/></svg>
<div class="a" style="left:1509px;top:423px;width:211px;height:582px;border:6px solid #ff2100;border-radius:14px"></div>
<div class="a" style="left:1855px;top:2px;width:17px;height:1007px;background:#f8f8f8;border-left:1px solid #ebebeb"></div>
<div class="a" style="left:1860px;top:13px;width:9px;height:126px;border-radius:5px;background:#c2c2c2"></div>
<div class="a" style="left:1871px;top:2px;width:1px;height:1007px;background:#e4e4e4"></div>
</div></body></html>
